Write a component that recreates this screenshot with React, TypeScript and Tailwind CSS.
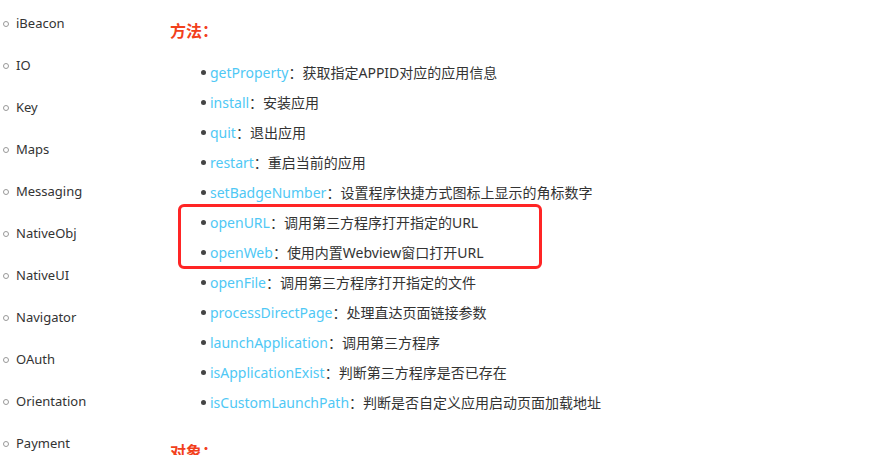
import React from "react";

const sideItems = [
  "iBeacon",
  "IO",
  "Key",
  "Maps",
  "Messaging",
  "NativeObj",
  "NativeUI",
  "Navigator",
  "OAuth",
  "Orientation",
  "Payment",
];

const methods: [string, string][] = [
  ["getProperty", "获取指定APPID对应的应用信息"],
  ["install", "安装应用"],
  ["quit", "退出应用"],
  ["restart", "重启当前的应用"],
  ["setBadgeNumber", "设置程序快捷方式图标上显示的角标数字"],
  ["openURL", "调用第三方程序打开指定的URL"],
  ["openWeb", "使用内置Webview窗口打开URL"],
  ["openFile", "调用第三方程序打开指定的文件"],
  ["processDirectPage", "处理直达页面链接参数"],
  ["launchApplication", "调用第三方程序"],
  ["isApplicationExist", "判断第三方程序是否已存在"],
  ["isCustomLaunchPath", "判断是否自定义应用启动页面加载地址"],
];

export default function App() {
  return (
    <div
      className="relative flex w-[881px] h-[455px] overflow-hidden bg-white text-[#333]"
      style={{ fontFamily: '"Noto Sans", "Noto Sans CJK SC", sans-serif' }}
    >
      {/* left nav */}
      <div className="w-[170px] shrink-0 pt-[3px]">
        {sideItems.map((name) => (
          <div key={name} className="flex items-center h-[42px] text-[13px]">
            <span className="ml-[3px] w-[6px] h-[6px] rounded-full border border-[#999]" />
            <span className="ml-[7px]">{name}</span>
          </div>
        ))}
      </div>

      {/* content */}
      <div className="flex-1 pt-[16px]">
        <h3 className="h-[30px] leading-[30px] text-[16px] font-bold text-[#f2401c]">
          方法：
        </h3>
        <ul className="mt-[11px]">
          {methods.map(([name, desc]) => (
            <li key={name} className="flex items-center h-[30px] text-[14px]">
              <span className="ml-[31px] mr-[4px] w-[5px] h-[5px] rounded-full bg-[#444]" />
              <span className="text-[#4fc8f5]">{name}</span>
              <span>：{desc}</span>
            </li>
          ))}
        </ul>
        <h3 className="mt-[20px] h-[30px] leading-[30px] text-[16px] font-bold text-[#f2401c]">
          对象：
        </h3>
      </div>

      {/* highlight annotation */}
      <div className="absolute left-[178px] top-[204px] w-[364px] h-[65px] border-[3px] border-[#ff2525] rounded-[6px]" />
    </div>
  );
}
